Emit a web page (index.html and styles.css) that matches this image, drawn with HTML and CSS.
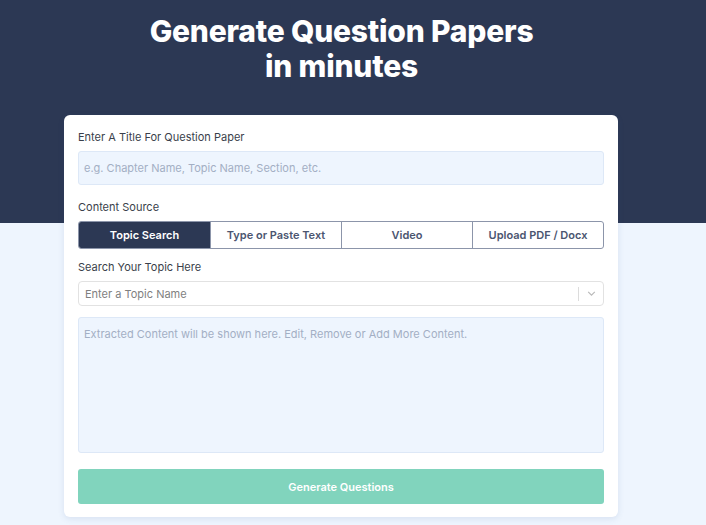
FILE: index.html
```html
<!DOCTYPE html>
<html>
<head>
<meta charset="utf-8">
<link rel="stylesheet" href="styles.css">
</head>
<body>
<header class="hero">
  <h1 class="hero-title">Generate Question Papers<br>in minutes</h1>
</header>
<main class="card">
  <label class="field-label">Enter A Title For Question Paper</label>
  <div class="title-input">e.g. Chapter Name, Topic Name, Section, etc.</div>

  <label class="field-label gap-top">Content Source</label>
  <div class="tabs">
    <div class="tab active">Topic Search</div>
    <div class="tab">Type or Paste Text</div>
    <div class="tab">Video</div>
    <div class="tab">Upload PDF / Docx</div>
  </div>

  <label class="field-label gap-top-sm">Search Your Topic Here</label>
  <div class="select">
    <span class="select-placeholder">Enter a Topic Name</span>
    <span class="select-sep"></span>
    <span class="select-arrow">
      <svg width="11" height="11" viewBox="0 0 20 20"><path d="M4 7 L10 13 L16 7" fill="none" stroke="#b8b8b8" stroke-width="2"/></svg>
    </span>
  </div>

  <div class="content-area">Extracted Content will be shown here. Edit, Remove or Add More Content.</div>

  <button class="generate-btn">Generate Questions</button>
</main>
</body>
</html>
```
FILE: styles.css
```css
* { box-sizing: border-box; }
html, body { margin: 0; padding: 0; }
body {
  background: #eef5fe;
  font-family: "Inter", "Open Sans", sans-serif;
  width: 706px;
  height: 525px;
  overflow: hidden;
}
.hero {
  background: #2c3854;
  height: 223px;
  padding-top: 14px;
}
.hero-title {
  margin: 0;
  width: 683px;
  text-align: center;
  color: #ffffff;
  font-size: 30px;
  line-height: 35px;
  font-weight: 800;
  letter-spacing: -0.2px;
}
.card {
  display: flex;
  flex-direction: column;
  width: 554px;
  margin: -108px 0 0 64px;
  background: #ffffff;
  border-radius: 6px;
  box-shadow: 0 2px 6px rgba(60, 90, 150, 0.12);
  padding: 14px 14px 13px 14px;
}
.field-label {
  font-size: 11px;
  line-height: 16px;
  color: #3a3f4b;
  margin-bottom: 6px;
}
.gap-top { margin-top: 14px; }
.gap-top-sm { margin-top: 10px; }
.title-input {
  height: 34px;
  background: #eef5fe;
  border: 1px solid #dde8f7;
  border-radius: 3px;
  font-size: 11px;
  color: #a3afc4;
  display: flex;
  align-items: center;
  padding-left: 5px;
}
.tabs {
  display: grid;
  grid-template-columns: repeat(4, 1fr);
  height: 28px;
  border: 1px solid #8c95aa;
  border-radius: 3px;
  overflow: hidden;
}
.tab {
  display: flex;
  align-items: center;
  justify-content: center;
  font-size: 11px;
  font-weight: 600;
  color: #4b5570;
  border-left: 1px solid #8c95aa;
}
.tab:first-child { border-left: none; }
.tab.active {
  background: #2c3854;
  color: #ffffff;
}
.select {
  height: 25px;
  border: 1px solid #e2e2e2;
  border-radius: 4px;
  display: flex;
  align-items: center;
  padding-left: 6px;
}
.select-placeholder {
  flex: 1;
  font-size: 11px;
  color: #7f7f7f;
}
.select-sep {
  width: 1px;
  height: 14px;
  background: #dcdcdc;
}
.select-arrow {
  width: 24px;
  display: flex;
  align-items: center;
  justify-content: center;
}
.content-area {
  margin-top: 11px;
  height: 136px;
  background: #eef5fe;
  border: 1px solid #dde8f7;
  border-radius: 3px;
  font-size: 11px;
  line-height: 16px;
  color: #a3afc4;
  padding: 8px 5px;
}
.generate-btn {
  margin-top: 16px;
  height: 35px;
  border: none;
  border-radius: 3px;
  background: #81d4bd;
  color: #ffffff;
  font-family: inherit;
  font-size: 11px;
  font-weight: 600;
}
```
